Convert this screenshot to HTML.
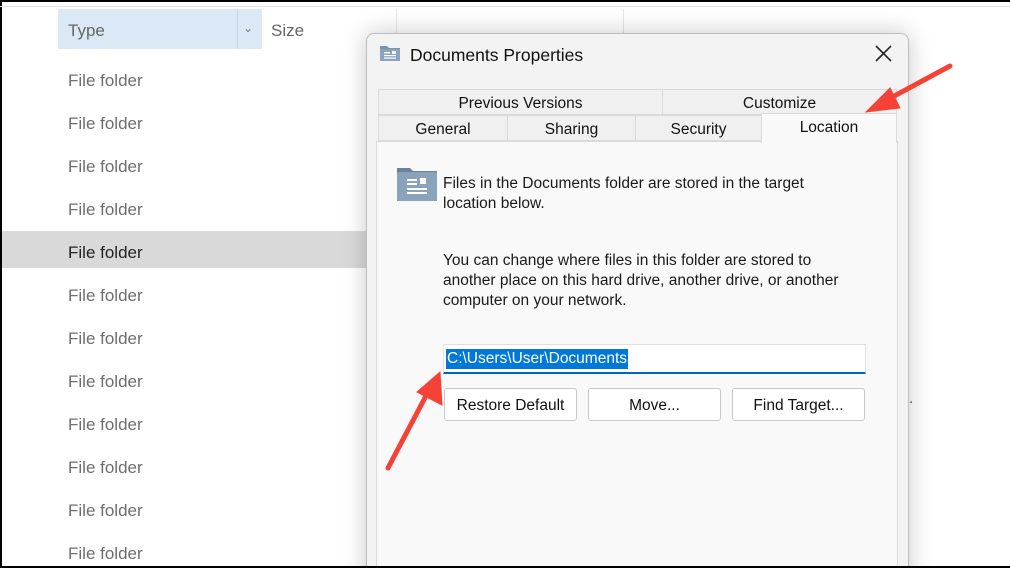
<!DOCTYPE html>
<html><head><meta charset="utf-8"><style>
*{margin:0;padding:0;box-sizing:border-box}
html,body{width:1010px;height:568px;overflow:hidden}
body{background:#fff;font-family:"Liberation Sans",Arial,sans-serif;position:relative}
.a{position:absolute}
.row{position:absolute;left:68px;font-size:17px;color:#6e6e6e;margin-top:2px}
.tab{position:absolute;height:26px;border:1px solid #dadada;background:#f0f0f0;font-size:15.5px;text-align:center;line-height:28px;color:#111}
.btn{position:absolute;top:388px;height:33px;border:1px solid #c8c8c8;border-radius:3px;background:#fff;font-size:15.5px;text-align:center;line-height:33px;color:#111}
.t{position:absolute;left:443px;font-size:15.5px;line-height:20px;color:#1a1a1a;margin-top:1px}
</style></head><body>
<div class="a" style="left:0;top:0;width:1010px;height:2px;background:#000"></div>
<div class="a" style="left:0;top:0;width:2px;height:568px;background:#000"></div>
<div class="a" style="left:0;top:6px;width:1010px;height:1px;background:#e2e2e2"></div>
<div class="a" style="left:58px;top:9px;width:204px;height:40px;background:#dbe9f6"></div>
<div class="a" style="left:237px;top:9px;width:1px;height:40px;background:#c5d6e6"></div>
<div class="a" style="left:243px;top:21px;font-size:12px;color:#777">&#8964;</div>
<div class="a" style="left:68px;top:21px;font-size:17px;color:#666">Type</div>
<div class="a" style="left:271px;top:21px;font-size:17px;color:#666">Size</div>
<div class="a" style="left:396px;top:9px;width:1px;height:28px;background:#e5e5e5"></div>
<div class="a" style="left:623px;top:9px;width:1px;height:28px;background:#e5e5e5"></div>
<div class="a" style="left:2px;top:231px;width:368px;height:37px;background:#d9d9d9"></div>
<div class="row" style="top:69px">File folder</div>
<div class="row" style="top:112px">File folder</div>
<div class="row" style="top:155px">File folder</div>
<div class="row" style="top:198px">File folder</div>
<div class="row" style="top:241px;color:#222">File folder</div>
<div class="row" style="top:284px">File folder</div>
<div class="row" style="top:327px">File folder</div>
<div class="row" style="top:370px">File folder</div>
<div class="row" style="top:413px">File folder</div>
<div class="row" style="top:456px">File folder</div>
<div class="row" style="top:499px">File folder</div>
<div class="row" style="top:542px">File folder</div>
<div class="a" style="left:900px;top:390px;font-size:16px;color:#666">e.</div>
<div class="a" style="left:366px;top:33px;width:543px;height:560px;background:#f3f3f3;border:1px solid #bdbdbd;border-radius:8px;box-shadow:0 0 24px rgba(0,0,0,0.22)"></div>
<svg class="a" style="left:379px;top:44px" width="22" height="18" viewBox="0 0 22 18"><path d="M1 2h7l2 2h11v13H1z" fill="#7d93ab"/><rect x="1" y="5" width="20" height="12" fill="#8ba3bc"/><rect x="5" y="8" width="6" height="1.5" fill="#fff"/><rect x="13" y="7" width="4" height="3" fill="#fff"/><rect x="5" y="11" width="12" height="1.2" fill="#fff"/><rect x="5" y="13.5" width="12" height="1.2" fill="#fff"/></svg>
<div class="a" style="left:410px;top:45px;font-size:17.5px;color:#111">Documents Properties</div>
<svg class="a" style="left:875px;top:45px" width="17" height="17"><path d="M1 1L16 16M16 1L1 16" stroke="#222" stroke-width="1.6"/></svg>
<div class="tab" style="left:378px;top:89px;width:285px">Previous Versions</div>
<div class="tab" style="left:662px;top:89px;width:235px">Customize</div>
<div class="tab" style="left:378px;top:115px;width:130px">General</div>
<div class="tab" style="left:507px;top:115px;width:129px">Sharing</div>
<div class="tab" style="left:635px;top:115px;width:127px">Security</div>
<div class="a" style="left:376px;top:141px;width:522px;height:440px;background:#f9f9f9;border:1px solid #dadada"></div>
<div class="tab" style="left:761px;top:113px;width:136px;height:30px;background:#f9f9f9;border-bottom:none;line-height:28px">Location</div>
<svg class="a" style="left:396px;top:167px" width="42" height="35" viewBox="0 0 42 35"><path d="M1 1h13l3 3h24v30H1z" fill="#6c8299"/><rect x="1" y="5" width="40" height="29" rx="2" fill="#8aa2bb"/><rect x="11" y="12" width="10" height="2" fill="#fff"/><rect x="11" y="16" width="10" height="2" fill="#fff"/><rect x="24" y="11" width="6" height="6" fill="#fff"/><rect x="11" y="21" width="20" height="2" fill="#fff"/><rect x="11" y="25" width="20" height="2" fill="#fff"/></svg>
<div class="t" style="top:173px">Files in the Documents folder are stored in the target<br>location below.</div>
<div class="t" style="top:250px">You can change where files in this folder are stored to<br>another place on this hard drive, another drive, or another<br>computer on your network.</div>
<div class="a" style="left:443px;top:344px;width:423px;height:30px;background:#fff;border:1px solid #e0e0e0;border-bottom:2px solid #0067c0"></div>
<div class="a" style="left:446px;top:349px;height:20px;padding:0 1px;background:#0078d7;color:#fff;font-size:15.5px;line-height:20px">C:\Users\User\Documents</div>
<div class="btn" style="left:444px;width:133px">Restore Default</div>
<div class="btn" style="left:588px;width:133px">Move...</div>
<div class="btn" style="left:732px;width:133px">Find Target...</div>
<svg class="a" style="left:0;top:0" width="1010" height="568"><g stroke="#f44336" stroke-width="5" fill="#f44336" stroke-linecap="round"><line x1="950" y1="66" x2="885" y2="101"/><polygon points="866,112 890,88 900,108" stroke-width="1"/><line x1="388" y1="468" x2="428" y2="392"/><polygon points="440,372 442,405 417,392" stroke-width="1"/></g></svg>
<div class="a" style="left:0;top:566px;width:1010px;height:2px;background:#000"></div>
</body></html>
